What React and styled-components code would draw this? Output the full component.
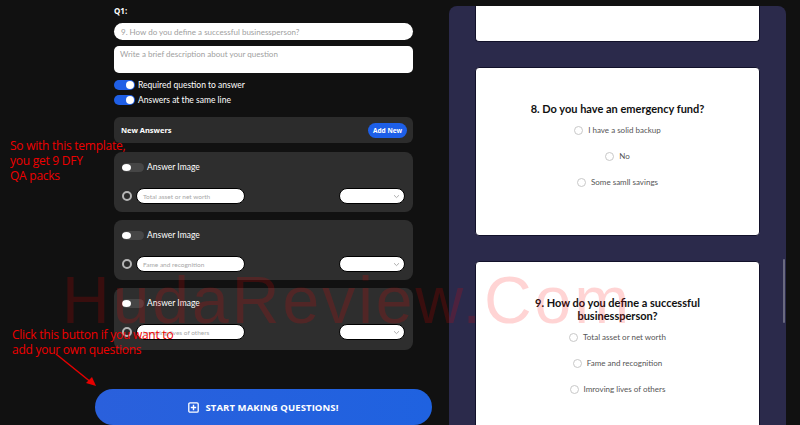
import React from "react";
import styled, { createGlobalStyle } from "styled-components";

const GlobalStyle = createGlobalStyle`
  html, body {
    margin: 0;
    padding: 0;
    background: #111111;
    overflow: hidden;
  }
  body {
    font-family: "Lato", "Open Sans", sans-serif;
  }
`;

const Page = styled.div`
  position: relative;
  width: 800px;
  height: 425px;
  overflow: hidden;
  display: flex;
  background: #111111;
`;

const LeftSide = styled.div`
  width: 337px;
  padding-left: 95px;
  display: flex;
  flex-direction: column;
`;

const Form = styled.div`
  margin: 0 19px;
  padding-top: 5px;
  display: flex;
  flex-direction: column;
`;

const QLabel = styled.div`
  color: #fff;
  font-family: "Noto Sans", sans-serif;
  font-weight: 700;
  font-size: 8px;
  height: 12px;
  line-height: 12px;
  margin-bottom: 6px;
`;

const TextInput = styled.div`
  height: 17px;
  background: #fff;
  border-radius: 9px;
  box-sizing: border-box;
  padding: 0 7px;
  display: flex;
  align-items: center;
  color: #a0a0a0;
  font-size: 8px;
`;

const TextArea = styled.div`
  height: 27px;
  margin-top: 6px;
  background: #fff;
  border-radius: 5px;
  box-sizing: border-box;
  padding: 3px 6px;
  color: #a0a0a0;
  font-size: 8px;
`;

const ToggleList = styled.div`
  margin-top: 7px;
  display: flex;
  flex-direction: column;
  gap: 5px;
`;

const ToggleRow = styled.div`
  display: flex;
  align-items: center;
  gap: 3px;
  color: #fff;
  font-size: 8.5px;
  height: 10px;
`;

const Switch = styled.div`
  width: ${(p) => (p.$small ? 22 : 21)}px;
  height: ${(p) => (p.$small ? 9 : 10)}px;
  border-radius: 6px;
  background: ${(p) => (p.$on ? "#1f5fe6" : "#464646")};
  position: relative;
  flex-shrink: 0;
  &::after {
    content: "";
    position: absolute;
    top: 1px;
    ${(p) => (p.$on ? "right: 1px;" : "left: 0px;")}
    width: ${(p) => (p.$small ? 9 : 8)}px;
    height: ${(p) => (p.$small ? 7 : 8)}px;
    border-radius: 50%;
    background: #fff;
  }
`;

const AnswersHeader = styled.div`
  margin-top: 12px;
  height: 26px;
  background: #2c2c2c;
  border-radius: 6px;
  display: flex;
  align-items: center;
  justify-content: space-between;
  padding: 0 6px 0 7px;
  color: #fff;
  font-family: "Noto Sans", sans-serif;
  font-weight: 700;
  font-size: 7.5px;
`;

const AddButton = styled.div`
  height: 15px;
  padding: 0 5px;
  border-radius: 8px;
  background: #1d5fe8;
  display: flex;
  align-items: center;
  font-size: 6.5px;
  font-weight: 700;
  color: #fff;
`;

const AnswerList = styled.div`
  margin-top: 9px;
  display: flex;
  flex-direction: column;
  gap: 8px;
`;

const AnswerCard = styled.div`
  height: ${(p) => p.$h || 60}px;
  background: #2e2e2e;
  border-radius: 8px;
  padding: 10px 8px 0 8px;
  box-sizing: border-box;
  display: flex;
  flex-direction: column;
`;

const AnswerRow = styled.div`
  margin-top: 16px;
  display: flex;
  align-items: center;
  justify-content: space-between;
`;

const RowLeft = styled.div`
  display: flex;
  align-items: center;
  gap: 4px;
`;

const Radio = styled.div`
  width: 10px;
  height: 10px;
  border-radius: 50%;
  box-sizing: border-box;
  border: 2px solid #b5b5b5;
  background: #2a2a2a;
`;

const PillInput = styled.div`
  width: 109px;
  height: 16px;
  box-sizing: border-box;
  border: 1px solid #000;
  border-radius: 8px;
  background: #fff;
  padding: 0 6px;
  display: flex;
  align-items: center;
  color: #a8a8a8;
  font-size: 6.5px;
`;

const Select = styled.div`
  width: 66px;
  height: 16px;
  box-sizing: border-box;
  border: 1px solid #000;
  border-radius: 8px;
  background: #fff;
  display: flex;
  align-items: center;
  justify-content: flex-end;
  padding-right: 4px;
`;

const StartButton = styled.div`
  margin-top: 39px;
  height: 36px;
  border-radius: 18px;
  background: linear-gradient(90deg, #2a60dc, #1f62e0);
  display: flex;
  align-items: center;
  justify-content: center;
  gap: 6px;
  color: #fff;
  font-family: "Open Sans", sans-serif;
  font-weight: 700;
  font-size: 9.5px;
  letter-spacing: 0.1px;
`;

const Preview = styled.div`
  margin-left: 17px;
  margin-top: 6px;
  width: 337px;
  height: 440px;
  background: #2b2a4b;
  border-radius: 8px;
  position: relative;
  overflow: hidden;
  display: flex;
  flex-direction: column;
  align-items: center;
  gap: 25px;
`;

const Scrollbar = styled.div`
  position: absolute;
  right: 1px;
  top: 253px;
  width: 2px;
  height: 64px;
  border-radius: 1px;
  background: #6a6a80;
`;

const QuestionCard = styled.div`
  width: 285px;
  height: ${(p) => p.$h}px;
  flex-shrink: 0;
  background: #fff;
  border: 1px solid #12112a;
  border-top: ${(p) => (p.$cut ? "none" : "1px solid #12112a")};
  border-radius: ${(p) => (p.$cut ? "0 0 4px 4px" : "4px")};
  box-sizing: border-box;
  display: flex;
  flex-direction: column;
  align-items: center;
  padding-top: 34px;
`;

const QuestionTitle = styled.div`
  font-family: "Lato", sans-serif;
  font-weight: 700;
  font-size: 11px;
  line-height: 13px;
  color: #111;
  text-align: center;
  width: 200px;
`;

const Options = styled.div`
  margin-top: 9px;
  display: flex;
  flex-direction: column;
  align-items: center;
  gap: 14px;
`;

const Option = styled.div`
  display: flex;
  align-items: center;
  gap: 5px;
  font-family: "Lato", sans-serif;
  font-size: 8px;
  color: #555;
  height: 12px;
  &::before {
    content: "";
    width: 9px;
    height: 9px;
    border-radius: 50%;
    border: 1px solid #c8c8c8;
    box-sizing: border-box;
  }
`;

const Note = styled.div`
  position: absolute;
  left: ${(p) => p.$x}px;
  top: ${(p) => p.$y}px;
  color: #ee0000;
  font-family: "Open Sans", sans-serif;
  font-size: 12px;
  line-height: 15px;
  letter-spacing: -0.25px;
  white-space: pre;
`;

const Watermark = styled.div`
  position: absolute;
  left: 62px;
  top: 262px;
  font-family: "Liberation Sans", Arial, sans-serif;
  font-size: 66px;
  letter-spacing: 3px;
  line-height: 76px;
  color: rgba(255, 0, 0, 0.17);
  pointer-events: none;
  white-space: nowrap;
`;

const Arrow = styled.svg`
  position: absolute;
  left: 50px;
  top: 350px;
`;

const Chevron = () => (
  <svg width="7" height="5" viewBox="0 0 7 5">
    <path d="M1 1.2 L3.5 3.6 L6 1.2" fill="none" stroke="#9a9a9a" strokeWidth="0.8" />
  </svg>
);

const PlusBox = () => (
  <svg width="11" height="11" viewBox="0 0 11 11">
    <rect x="0.8" y="0.8" width="9.4" height="9.4" rx="1.2" fill="none" stroke="#fff" strokeWidth="1.3" />
    <path d="M5.5 2.8 V8.2 M2.8 5.5 H8.2" stroke="#fff" strokeWidth="1.4" />
  </svg>
);

const answers = [
  { text: "Total asset or net worth", h: 60 },
  { text: "Fame and recognition", h: 60 },
  { text: "Imroving lives of others", h: 62 },
];

export default function App() {
  return (
    <>
      <GlobalStyle />
      <Page>
        <LeftSide>
          <Form>
            <QLabel>Q1:</QLabel>
            <TextInput>9. How do you define a successful businessperson?</TextInput>
            <TextArea>Write a brief description about your question</TextArea>
            <ToggleList>
              <ToggleRow>
                <Switch $on />
                Required question to answer
              </ToggleRow>
              <ToggleRow>
                <Switch $on />
                Answers at the same line
              </ToggleRow>
            </ToggleList>
            <AnswersHeader>
              New Answers
              <AddButton>Add New</AddButton>
            </AnswersHeader>
            <AnswerList>
              {answers.map((a) => (
                <AnswerCard key={a.text} $h={a.h}>
                  <ToggleRow>
                    <Switch $small />
                    Answer Image
                  </ToggleRow>
                  <AnswerRow>
                    <RowLeft>
                      <Radio />
                      <PillInput>{a.text}</PillInput>
                    </RowLeft>
                    <Select>
                      <Chevron />
                    </Select>
                  </AnswerRow>
                </AnswerCard>
              ))}
            </AnswerList>
          </Form>
          <StartButton>
            <PlusBox />
            START MAKING QUESTIONS!
          </StartButton>
        </LeftSide>

        <Preview>
          <QuestionCard $h={36} $cut />
          <QuestionCard $h={169}>
            <QuestionTitle>8. Do you have an emergency fund?</QuestionTitle>
            <Options>
              <Option>I have a solid backup</Option>
              <Option>No</Option>
              <Option>Some samll savings</Option>
            </Options>
          </QuestionCard>
          <QuestionCard $h={200}>
            <QuestionTitle>9. How do you define a successful businessperson?</QuestionTitle>
            <Options>
              <Option>Total asset or net worth</Option>
              <Option>Fame and recognition</Option>
              <Option>Imroving lives of others</Option>
            </Options>
          </QuestionCard>
          <Scrollbar />
        </Preview>

        <Watermark>HudaReview.Com</Watermark>
        <Note $x={10} $y={138}>{"So with this template,\nyou get 9 DFY\nQA packs"}</Note>
        <Note $x={12} $y={327}>{"Click this button if you want to\nadd your own questions"}</Note>
        <Arrow width="50" height="40" viewBox="0 0 50 40">
          <path d="M6 4 L42 33" stroke="#e60000" strokeWidth="1.5" />
          <path d="M46 36 L36 33 L42 27 Z" fill="#e60000" />
        </Arrow>
      </Page>
    </>
  );
}
